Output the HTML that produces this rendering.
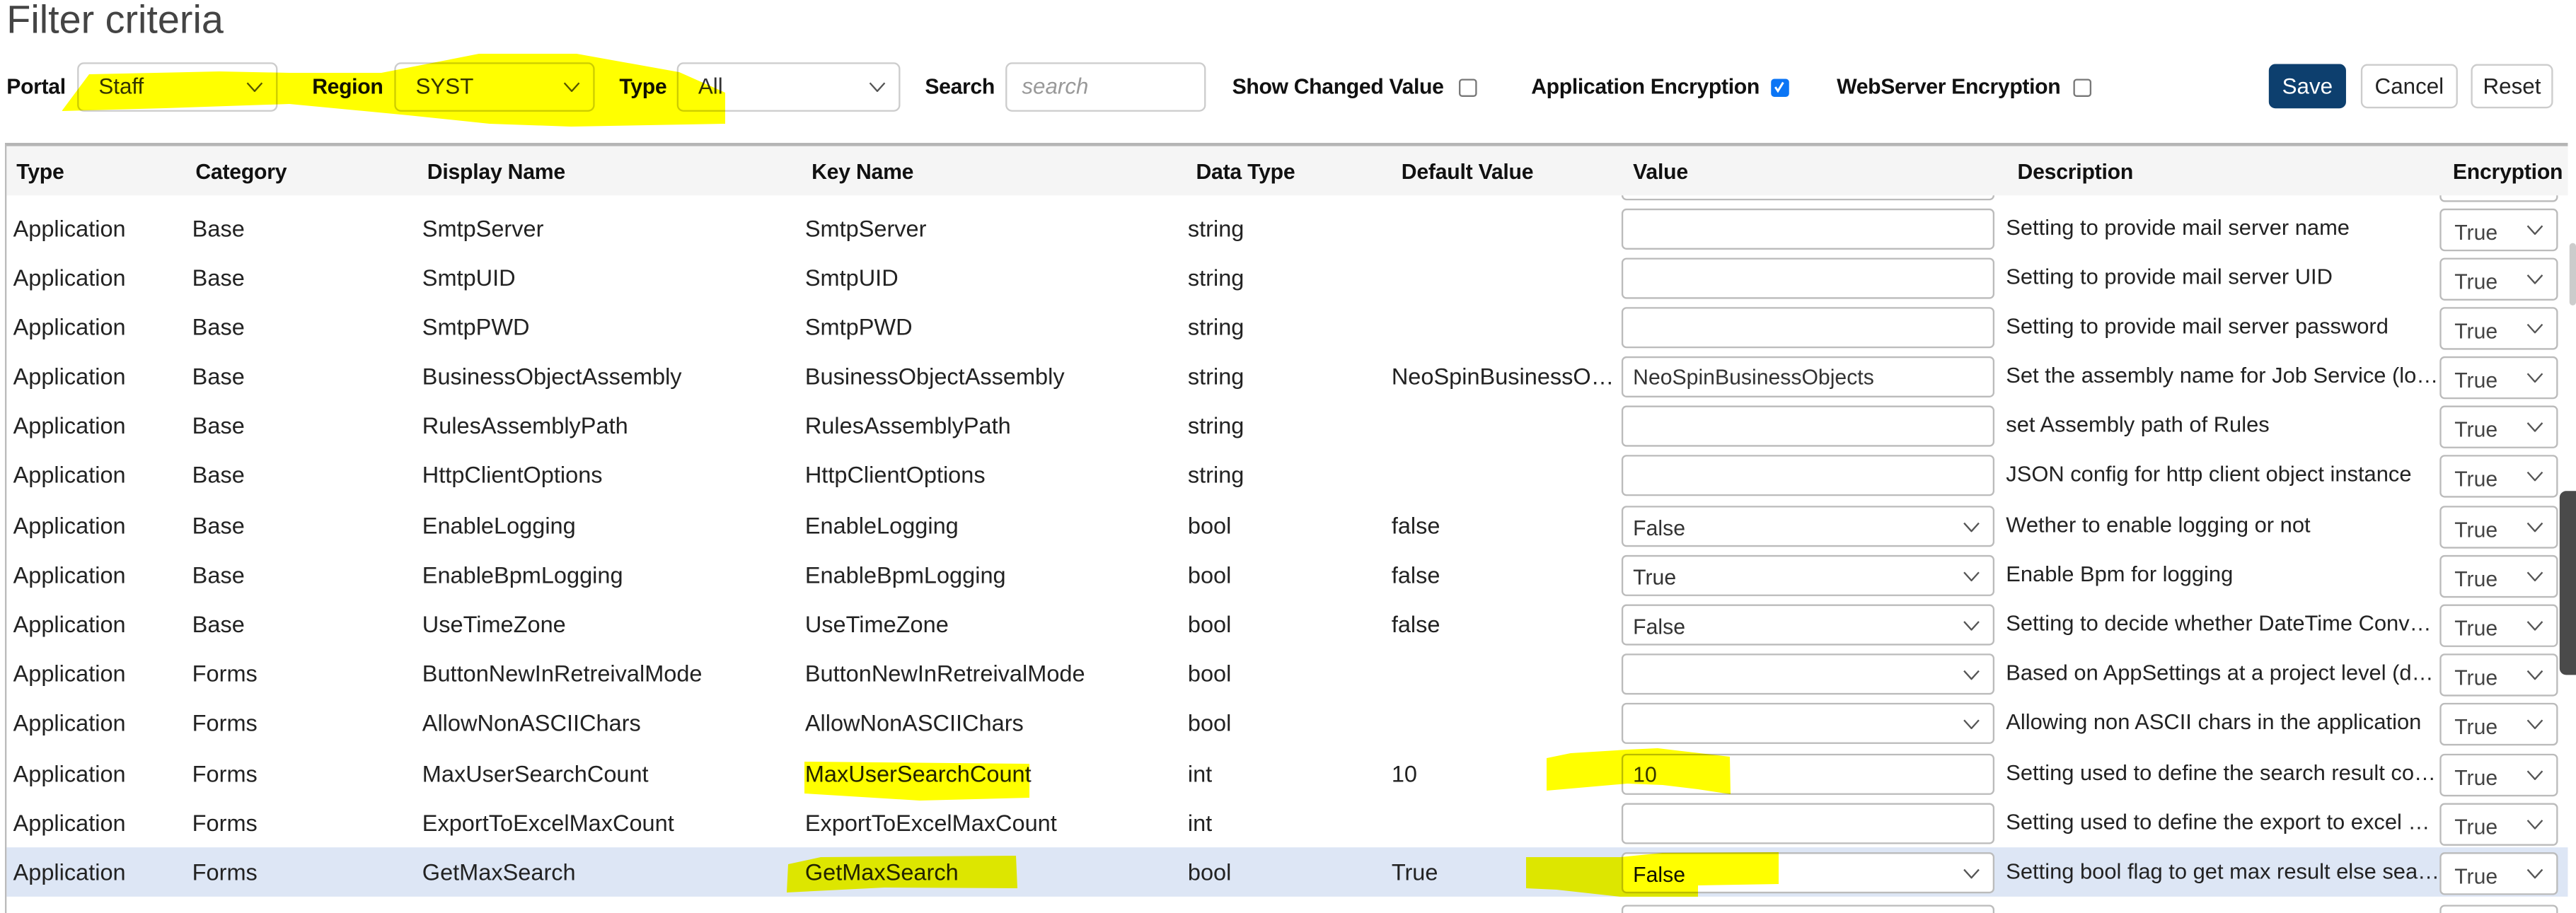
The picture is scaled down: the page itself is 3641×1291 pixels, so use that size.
<!DOCTYPE html>
<html><head><meta charset="utf-8"><style>
html,body{margin:0;padding:0;background:#fff;width:3641px;height:1290px;overflow:hidden}
#w{position:absolute;left:0;top:0;width:1568px;height:556px;overflow:hidden;transform:scale(2.3221);transform-origin:0 0;font-family:"Liberation Sans",sans-serif;color:#222;font-size:14px}
.a{position:absolute;white-space:nowrap}
.lb{font-weight:bold;color:#111;font-size:13px;letter-spacing:-0.15px;top:45px}
.sel{position:absolute;border:1px solid #ccc;border-radius:4px;background:#fff;box-sizing:border-box}
.sel span{position:absolute;left:12px;top:6px;font-size:13.5px;color:#333}
.chev{position:absolute;right:8px;top:50%;margin-top:-3px;width:10px;height:6px}
.cb{position:absolute;width:11px;height:11px;border:1.5px solid #777;border-radius:2px;box-sizing:border-box;background:#fff}
.btn{position:absolute;border:1px solid #ccc;border-radius:4px;box-sizing:border-box;text-align:center;font-size:13.5px;line-height:26px;color:#222;background:#fff}
.row{position:absolute;left:4px;width:1559px;height:30px}
.row .a{top:7px}
.c1{left:4px}.c2{left:113px}.c3{left:253px}.c4{left:486px}.c5{left:719px}.c6{left:843px}
.c8{left:1217px;width:264px;overflow:hidden;text-overflow:ellipsis;font-size:13.3px}
.in{position:absolute;left:983px;top:3px;width:227px;height:25px;border:1px solid #bbb;border-radius:3px;box-sizing:border-box;background:#fff}
.in span{position:absolute;left:6px;top:4px;font-size:13px;color:#333}
.en{position:absolute;left:1481px;top:3px;width:72px;height:26px;border:1px solid #bbb;border-radius:3px;box-sizing:border-box;background:#fff}
.en span{position:absolute;left:8px;top:6px;font-size:13px;color:#444}
.hd{position:absolute;left:4px;top:89px;width:1559px;height:30px;background:#f5f5f5;z-index:3;font-weight:bold;color:#111;font-size:13px;letter-spacing:-0.1px}
.hd .a{top:8px}
</style></head><body>
<div id="w">
<div class="a" style="left:4px;top:-1px;font-size:24px;color:#444">Filter criteria</div>

<div class="a lb" style="left:4px">Portal</div>
<div class="sel" style="left:47px;top:38px;width:122px;height:30px"><span>Staff</span><svg class="chev" viewBox="0 0 10 6"><polyline points="0.5,0.5 5,5.5 9.5,0.5" fill="none" stroke="#555" stroke-width="1"/></svg></div>
<div class="a lb" style="left:190px">Region</div>
<div class="sel" style="left:240px;top:38px;width:122px;height:30px"><span>SYST</span><svg class="chev" viewBox="0 0 10 6"><polyline points="0.5,0.5 5,5.5 9.5,0.5" fill="none" stroke="#555" stroke-width="1"/></svg></div>
<div class="a lb" style="left:377px">Type</div>
<div class="sel" style="left:412px;top:38px;width:136px;height:30px"><span>All</span><svg class="chev" viewBox="0 0 10 6"><polyline points="0.5,0.5 5,5.5 9.5,0.5" fill="none" stroke="#555" stroke-width="1"/></svg></div>
<div class="a lb" style="left:563px">Search</div>
<div class="sel" style="left:612px;top:38px;width:122px;height:30px"><span style="font-style:italic;color:#999;left:9px">search</span></div>
<div class="a lb" style="left:750px">Show Changed Value</div>
<div class="cb" style="left:888px;top:48px"></div>
<div class="a lb" style="left:932px">Application Encryption</div>
<div class="cb" style="left:1078px;top:48px;background:#0b75f5;border-color:#0b75f5"><svg viewBox="0 0 10 10" style="position:absolute;left:0;top:0;width:8px;height:8px"><polyline points="2,5 4,8 8,1.5" fill="none" stroke="#fff" stroke-width="1.6"/></svg></div>
<div class="a lb" style="left:1118px">WebServer Encryption</div>
<div class="cb" style="left:1262px;top:48px"></div>
<div class="btn" style="left:1381px;top:39px;width:47px;height:27px;background:#0d3f6e;border-color:#0d3f6e;color:#fff">Save</div>
<div class="btn" style="left:1437px;top:39px;width:59px;height:27px">Cancel</div>
<div class="btn" style="left:1504px;top:39px;width:50px;height:27px">Reset</div>

<div style="position:absolute;left:3px;top:87px;width:1560px;height:2px;background:#b5b5b5;z-index:4"></div>
<div style="position:absolute;left:3px;top:88px;width:1px;height:470px;background:#bbb;z-index:4"></div>
<div class="hd">
<div class="a" style="left:6px">Type</div><div class="a" style="left:115px">Category</div><div class="a" style="left:256px">Display Name</div><div class="a" style="left:490px">Key Name</div><div class="a" style="left:724px">Data Type</div><div class="a" style="left:849px">Default Value</div><div class="a" style="left:990px">Value</div><div class="a" style="left:1224px">Description</div><div class="a" style="left:1489px">Encryption</div>
</div>

<div class="row" style="top:94px"><div class="in"></div><div class="en"></div></div>
<div class="row" style="top:124px"><div class="a c1">Application</div><div class="a c2">Base</div><div class="a c3">SmtpServer</div><div class="a c4">SmtpServer</div><div class="a c5">string</div><div class="in"></div><div class="a c8">Setting to provide mail server name</div><div class="en"><span>True</span><svg class="chev" viewBox="0 0 10 6"><polyline points="0.5,0.5 5,5.5 9.5,0.5" fill="none" stroke="#555" stroke-width="1"/></svg></div></div>
<div class="row" style="top:154px"><div class="a c1">Application</div><div class="a c2">Base</div><div class="a c3">SmtpUID</div><div class="a c4">SmtpUID</div><div class="a c5">string</div><div class="in"></div><div class="a c8">Setting to provide mail server UID</div><div class="en"><span>True</span><svg class="chev" viewBox="0 0 10 6"><polyline points="0.5,0.5 5,5.5 9.5,0.5" fill="none" stroke="#555" stroke-width="1"/></svg></div></div>
<div class="row" style="top:184px"><div class="a c1">Application</div><div class="a c2">Base</div><div class="a c3">SmtpPWD</div><div class="a c4">SmtpPWD</div><div class="a c5">string</div><div class="in"></div><div class="a c8">Setting to provide mail server password</div><div class="en"><span>True</span><svg class="chev" viewBox="0 0 10 6"><polyline points="0.5,0.5 5,5.5 9.5,0.5" fill="none" stroke="#555" stroke-width="1"/></svg></div></div>
<div class="row" style="top:214px"><div class="a c1">Application</div><div class="a c2">Base</div><div class="a c3">BusinessObjectAssembly</div><div class="a c4">BusinessObjectAssembly</div><div class="a c5">string</div><div class="a c6" style="width:138px;overflow:hidden;text-overflow:ellipsis">NeoSpinBusinessObjects</div><div class="in"><span>NeoSpinBusinessObjects</span></div><div class="a c8">Set the assembly name for Job Service (loading)</div><div class="en"><span>True</span><svg class="chev" viewBox="0 0 10 6"><polyline points="0.5,0.5 5,5.5 9.5,0.5" fill="none" stroke="#555" stroke-width="1"/></svg></div></div>
<div class="row" style="top:244px"><div class="a c1">Application</div><div class="a c2">Base</div><div class="a c3">RulesAssemblyPath</div><div class="a c4">RulesAssemblyPath</div><div class="a c5">string</div><div class="in"></div><div class="a c8">set Assembly path of Rules</div><div class="en"><span>True</span><svg class="chev" viewBox="0 0 10 6"><polyline points="0.5,0.5 5,5.5 9.5,0.5" fill="none" stroke="#555" stroke-width="1"/></svg></div></div>
<div class="row" style="top:274px"><div class="a c1">Application</div><div class="a c2">Base</div><div class="a c3">HttpClientOptions</div><div class="a c4">HttpClientOptions</div><div class="a c5">string</div><div class="in"></div><div class="a c8">JSON config for http client object instance</div><div class="en"><span>True</span><svg class="chev" viewBox="0 0 10 6"><polyline points="0.5,0.5 5,5.5 9.5,0.5" fill="none" stroke="#555" stroke-width="1"/></svg></div></div>
<div class="row" style="top:305px"><div class="a c1">Application</div><div class="a c2">Base</div><div class="a c3">EnableLogging</div><div class="a c4">EnableLogging</div><div class="a c5">bool</div><div class="a c6">false</div><div class="in"><span style="top:5px">False</span><svg class="chev" viewBox="0 0 10 6"><polyline points="0.5,0.5 5,5.5 9.5,0.5" fill="none" stroke="#555" stroke-width="1"/></svg></div><div class="a c8">Wether to enable logging or not</div><div class="en"><span>True</span><svg class="chev" viewBox="0 0 10 6"><polyline points="0.5,0.5 5,5.5 9.5,0.5" fill="none" stroke="#555" stroke-width="1"/></svg></div></div>
<div class="row" style="top:335px"><div class="a c1">Application</div><div class="a c2">Base</div><div class="a c3">EnableBpmLogging</div><div class="a c4">EnableBpmLogging</div><div class="a c5">bool</div><div class="a c6">false</div><div class="in"><span style="top:5px">True</span><svg class="chev" viewBox="0 0 10 6"><polyline points="0.5,0.5 5,5.5 9.5,0.5" fill="none" stroke="#555" stroke-width="1"/></svg></div><div class="a c8">Enable Bpm for logging</div><div class="en"><span>True</span><svg class="chev" viewBox="0 0 10 6"><polyline points="0.5,0.5 5,5.5 9.5,0.5" fill="none" stroke="#555" stroke-width="1"/></svg></div></div>
<div class="row" style="top:365px"><div class="a c1">Application</div><div class="a c2">Base</div><div class="a c3">UseTimeZone</div><div class="a c4">UseTimeZone</div><div class="a c5">bool</div><div class="a c6">false</div><div class="in"><span style="top:5px">False</span><svg class="chev" viewBox="0 0 10 6"><polyline points="0.5,0.5 5,5.5 9.5,0.5" fill="none" stroke="#555" stroke-width="1"/></svg></div><div class="a c8">Setting to decide whether DateTime Conversion</div><div class="en"><span>True</span><svg class="chev" viewBox="0 0 10 6"><polyline points="0.5,0.5 5,5.5 9.5,0.5" fill="none" stroke="#555" stroke-width="1"/></svg></div></div>
<div class="row" style="top:395px"><div class="a c1">Application</div><div class="a c2">Forms</div><div class="a c3">ButtonNewInRetreivalMode</div><div class="a c4">ButtonNewInRetreivalMode</div><div class="a c5">bool</div><div class="in"><svg class="chev" viewBox="0 0 10 6"><polyline points="0.5,0.5 5,5.5 9.5,0.5" fill="none" stroke="#555" stroke-width="1"/></svg></div><div class="a c8">Based on AppSettings at a project level (default)</div><div class="en"><span>True</span><svg class="chev" viewBox="0 0 10 6"><polyline points="0.5,0.5 5,5.5 9.5,0.5" fill="none" stroke="#555" stroke-width="1"/></svg></div></div>
<div class="row" style="top:425px"><div class="a c1">Application</div><div class="a c2">Forms</div><div class="a c3">AllowNonASCIIChars</div><div class="a c4">AllowNonASCIIChars</div><div class="a c5">bool</div><div class="in"><svg class="chev" viewBox="0 0 10 6"><polyline points="0.5,0.5 5,5.5 9.5,0.5" fill="none" stroke="#555" stroke-width="1"/></svg></div><div class="a c8">Allowing non ASCII chars in the application</div><div class="en"><span>True</span><svg class="chev" viewBox="0 0 10 6"><polyline points="0.5,0.5 5,5.5 9.5,0.5" fill="none" stroke="#555" stroke-width="1"/></svg></div></div>
<div class="row" style="top:456px"><div class="a c1">Application</div><div class="a c2">Forms</div><div class="a c3">MaxUserSearchCount</div><div class="a c4">MaxUserSearchCount</div><div class="a c5">int</div><div class="a c6">10</div><div class="in"><span>10</span></div><div class="a c8">Setting used to define the search result count</div><div class="en"><span>True</span><svg class="chev" viewBox="0 0 10 6"><polyline points="0.5,0.5 5,5.5 9.5,0.5" fill="none" stroke="#555" stroke-width="1"/></svg></div></div>
<div class="row" style="top:486px"><div class="a c1">Application</div><div class="a c2">Forms</div><div class="a c3">ExportToExcelMaxCount</div><div class="a c4">ExportToExcelMaxCount</div><div class="a c5">int</div><div class="in"></div><div class="a c8">Setting used to define the export to excel count</div><div class="en"><span>True</span><svg class="chev" viewBox="0 0 10 6"><polyline points="0.5,0.5 5,5.5 9.5,0.5" fill="none" stroke="#555" stroke-width="1"/></svg></div></div>
<div class="row" style="top:516px;background:#dde6f5"><div class="a c1">Application</div><div class="a c2">Forms</div><div class="a c3">GetMaxSearch</div><div class="a c4">GetMaxSearch</div><div class="a c5">bool</div><div class="a c6">True</div><div class="in"><span style="top:5px;color:#111">False</span><svg class="chev" viewBox="0 0 10 6"><polyline points="0.5,0.5 5,5.5 9.5,0.5" fill="none" stroke="#555" stroke-width="1"/></svg></div><div class="a c8">Setting bool flag to get max result else search</div><div class="en"><span>True</span><svg class="chev" viewBox="0 0 10 6"><polyline points="0.5,0.5 5,5.5 9.5,0.5" fill="none" stroke="#555" stroke-width="1"/></svg></div></div>
<div class="row" style="top:548px"><div class="in"></div><div class="en"></div></div>

<div style="position:absolute;left:1564px;top:148px;width:4px;height:38px;background:#ccc;border-radius:2px"></div>
<div style="position:absolute;left:1558px;top:299px;width:10px;height:112px;background:#4a4a4a;border-radius:4px 0 0 4px"></div>
</div>

<svg width="3641" height="1290" style="position:absolute;left:0;top:0;mix-blend-mode:multiply" viewBox="0 0 3641 1290">
<polygon fill="#ffff00" points="88,156 126,105 310,101 409,103 539,103 616,88 677,76 815,76 960,102 1025,131 1025,175 807,179 692,175 577,163 409,147 233,153 88,157"/>
<polygon fill="#ffff00" points="1137,1077 1455,1080 1455,1128 1300,1132 1137,1122"/>
<polygon fill="#ffff00" points="2186,1072 2220,1065 2300,1060 2343,1058 2445,1070 2446,1123 2400,1116 2350,1110 2300,1108 2186,1118"/>
<polygon fill="#ffff00" points="1114,1222 1160,1212 1436,1210 1438,1256 1250,1255 1112,1262"/>
<polygon fill="#ffff00" points="2157,1212 2290,1212 2350,1206 2514,1205 2514,1250 2400,1252 2400,1268 2290,1268 2200,1258 2157,1256"/>
</svg>
</body></html>
